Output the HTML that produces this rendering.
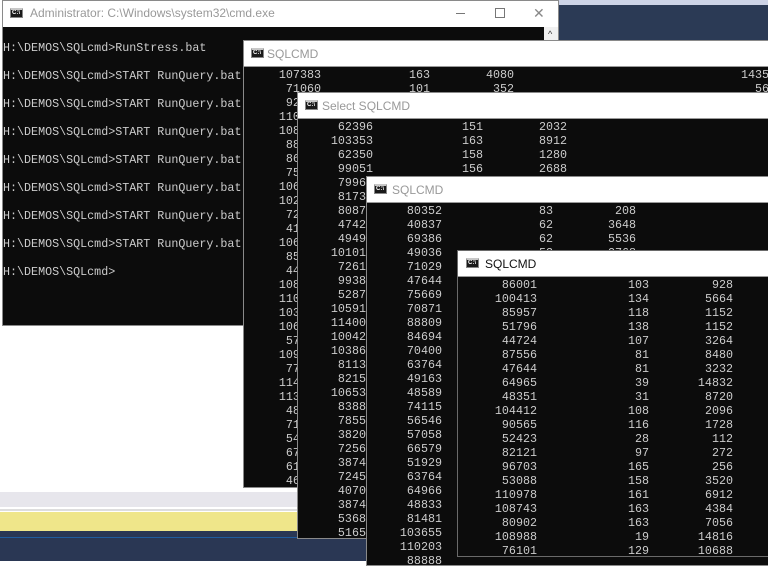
<!DOCTYPE html>
<html><head><meta charset="utf-8"><style>
*{margin:0;padding:0;box-sizing:border-box}
body{width:768px;height:561px;position:relative;overflow:hidden;background:#fff;font-family:"Liberation Mono",monospace}
.abs{position:absolute}
.win{position:absolute;background:#0c0c0c;border:1px solid #8a8a8a;overflow:hidden}
.tb{position:absolute;left:0;top:0;right:0;height:26px;background:#fff;border-bottom:1px solid #9a9a9a}
.tt{position:absolute;top:6px;font:12px "Liberation Sans",sans-serif;color:#999}
.ic{position:absolute;width:13px;height:10px;background:#1a1a1a;border:1px solid #888;border-top:2px solid #c8c8c8;overflow:hidden}
.ic span{position:absolute;left:1px;top:0px;font:bold 6px/6px "Liberation Sans",sans-serif;color:#fff}
.col{position:absolute;left:0;white-space:pre;text-align:right;font-size:11.7px;line-height:14px;color:#cccccc}
.lines{position:absolute;left:1px;white-space:pre;font-size:11.7px;line-height:14px;color:#cccccc}
</style></head><body>
<div class="abs" style="left:559px;top:0;width:209px;height:5px;background:#cdd3e6"></div>
<div class="abs" style="left:559px;top:5px;width:209px;height:36px;background:#2b3a55"></div>
<div class="abs" style="left:0;top:492px;width:768px;height:15px;background:#e7e6ec"></div>
<div class="abs" style="left:0;top:509px;width:768px;height:2px;background:#ddd"></div>
<div class="abs" style="left:0;top:512px;width:768px;height:19px;background:#efe68a"></div>
<div class="abs" style="left:0;top:531px;width:768px;height:30px;background:#2a3754"></div>
<div class="abs" style="left:0;top:537px;width:768px;height:1px;background:#1f5c9e"></div>

<div class="win" style="left:2px;top:0;width:557px;height:326px">
 <div class="tb" style="border-bottom:none;height:26px"></div>
 <div class="ic" style="left:7px;top:7px"><span>C:\</span></div>
 <div class="tt" style="left:27px;top:5px">Administrator: C:\Windows\system32\cmd.exe</div>
 <div class="abs" style="left:453px;top:12px;width:9px;height:1px;background:#777"></div>
 <div class="abs" style="left:492px;top:7px;width:10px;height:10px;border:1px solid #777"></div>
 <div class="abs" style="left:530px;top:4px;font:14px 'Liberation Sans',sans-serif;color:#888">✕</div>
 <div class="abs" style="left:541px;top:26px;width:16px;height:300px;background:#f0f0f0"></div>
 <div class="abs" style="left:545px;top:28px;font:9px 'Liberation Sans',sans-serif;color:#333">^</div>
 <div class="lines" style="top:40px;left:0">H:\DEMOS\SQLcmd&gt;RunStress.bat

H:\DEMOS\SQLcmd&gt;START RunQuery.bat

H:\DEMOS\SQLcmd&gt;START RunQuery.bat

H:\DEMOS\SQLcmd&gt;START RunQuery.bat

H:\DEMOS\SQLcmd&gt;START RunQuery.bat

H:\DEMOS\SQLcmd&gt;START RunQuery.bat

H:\DEMOS\SQLcmd&gt;START RunQuery.bat

H:\DEMOS\SQLcmd&gt;START RunQuery.bat

H:\DEMOS\SQLcmd&gt;</div>
</div>

<div class="win" style="left:243px;top:40px;width:530px;height:448px">
 <div class="tb"></div>
 <div class="ic" style="left:7px;top:7px"><span>C:\</span></div>
 <div class="tt" style="left:23px">SQLCMD</div>
 <div class="col" style="top:27px;width:77px">107383
71060
92415
110266
108412
88341
86723
75912
106544
102317
72480
41936
106221
85147
44903
108256
110587
103224
106931
57482
109340
77215
114806
113592
48671
71935
54270
67318
61427
46895</div>
 <div class="col" style="top:27px;width:186px">163
101</div>
 <div class="col" style="top:27px;width:270px">4080
352</div>
 <div class="col" style="top:27px;width:525px">1435
56</div>
</div>

<div class="win" style="left:297px;top:92px;width:476px;height:447px">
 <div class="tb"></div>
 <div class="ic" style="left:7px;top:7px"><span>C:\</span></div>
 <div class="tt" style="left:24px">Select SQLCMD</div>
 <div class="col" style="top:27px;width:75px">62396
103353
62350
99051
79961
81733
80872
47420
49496
101012
72614
99385
52872
105912
114003
100424
103863
81136
82157
106532
83884
78559
38209
72561
38747
72452
40702
38741
53683
51653</div>
 <div class="col" style="top:27px;width:185px">151
163
158
156</div>
 <div class="col" style="top:27px;width:269px">2032
8912
1280
2688</div>
</div>

<div class="win" style="left:366px;top:176px;width:407px;height:390px">
 <div class="tb"></div>
 <div class="ic" style="left:7px;top:7px"><span>C:\</span></div>
 <div class="tt" style="left:25px">SQLCMD</div>
 <div class="col" style="top:27px;width:75px">80352
40837
69386
49036
71029
47644
75669
70871
88809
84694
70400
63764
49163
48589
74115
56546
57058
66579
51929
63764
64966
48833
81481
103655
110203
88888</div>
 <div class="col" style="top:27px;width:186px">83
62
62
53</div>
 <div class="col" style="top:27px;width:269px">208
3648
5536
2768</div>
</div>

<div class="win" style="left:457px;top:250px;width:316px;height:307px;border-color:#6a6a6a">
 <div class="tb"></div>
 <div class="ic" style="left:8px;top:7px"><span>C:\</span></div>
 <div class="tt" style="left:27px;color:#111">SQLCMD</div>
 <div class="col" style="top:27px;width:79px">86001
100413
85957
51796
44724
87556
47644
64965
48351
104412
90565
52423
82121
96703
53088
110978
108743
80902
108988
76101</div>
 <div class="col" style="top:27px;width:191px">103
134
118
138
107
81
81
39
31
108
116
28
97
165
158
161
163
163
19
129</div>
 <div class="col" style="top:27px;width:275px">928
5664
1152
1152
3264
8480
3232
14832
8720
2096
1728
112
272
256
3520
6912
4384
7056
14816
10688</div>
</div>
</body></html>
